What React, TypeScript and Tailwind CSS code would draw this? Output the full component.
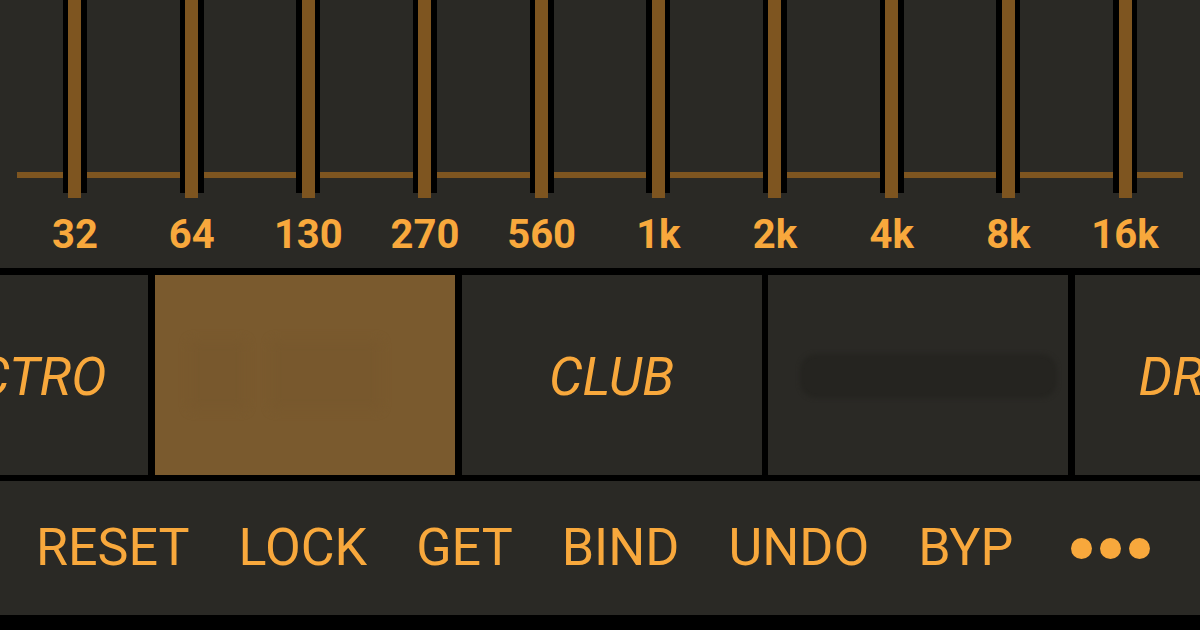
import React from "react";

const bands = ["32", "64", "130", "270", "560", "1k", "2k", "4k", "8k", "16k"];

function Slider() {
  return (
    <div className="relative w-[24px] h-[198px]">
      <div className="w-[24px] h-[193px] bg-black" />
      <div className="absolute left-[5.5px] top-0 w-[13px] h-[198px] bg-[#7e5520]" />
    </div>
  );
}

export default function App() {
  const font = { fontFamily: "Roboto, 'Noto Sans', sans-serif" };
  return (
    <div className="w-[1200px] h-[630px] bg-black flex flex-col overflow-hidden" style={font}>
      {/* EQ section */}
      <div className="h-[268px] bg-[#2a2925] px-[16.67px] shrink-0">
        <div className="relative h-[198px]">
          <div className="absolute left-0 right-0 top-[172px] h-[6px] bg-[#7e5520]" />
          <div className="relative grid grid-cols-10 h-full">
            {bands.map((b) => (
              <div key={b} className="flex justify-center">
                <Slider />
              </div>
            ))}
          </div>
        </div>
        <div className="grid grid-cols-10 h-[70px] pt-[3px]">
          {bands.map((b) => (
            <div
              key={b}
              className="flex items-center justify-center text-[40px] leading-none font-bold text-[#f8a83c]"
            >
              {b}
            </div>
          ))}
        </div>
      </div>

      {/* Presets row */}
      <div className="h-[213px] bg-black pt-[7px] pb-[6px] shrink-0 overflow-hidden">
        <div className="flex h-full gap-[6.67px] ml-[-151.67px]">
          <div className="w-[300px] shrink-0 h-full bg-[#2a2925] flex items-center justify-center pt-[4px] italic text-[53px] leading-none text-[#f8a83c]">
            ELECTRO
          </div>
          <div className="w-[300px] shrink-0 h-full bg-[#7a5a2e] flex items-center justify-center gap-[25px] pr-[40px]">
            <div className="w-[57px] h-[70px] rounded-[6px] bg-[#78582d] blur-[5px]" />
            <div className="w-[110px] h-[70px] rounded-[6px] bg-[#78582d] blur-[5px]" />
          </div>
          <div className="w-[300px] shrink-0 h-full bg-[#2a2925] flex items-center justify-center pt-[4px] italic text-[53px] leading-none text-[#f8a83c]">
            CLUB
          </div>
          <div className="w-[300px] shrink-0 h-full bg-[#2a2925] flex items-center justify-center pl-[20px] pt-[2px]">
            <div className="w-[257px] h-[44px] rounded-[16px] bg-[#252420] blur-[2px]" />
          </div>
          <div className="w-[300px] shrink-0 h-full bg-[#2a2925] flex items-center justify-center pt-[4px] italic text-[53px] leading-none text-[#f8a83c]">
            DREAM
          </div>
        </div>
      </div>

      {/* Bottom bar */}
      <div className="h-[134px] bg-[#2a2925] flex items-center pl-[36px] gap-[49px] shrink-0 text-[52px] leading-none text-[#f8a83c]">
        <span>RESET</span>
        <span>LOCK</span>
        <span>GET</span>
        <span>BIND</span>
        <span>UNDO</span>
        <span>BYP</span>
        <div className="flex items-center gap-[8px] ml-[9px]">
          <div className="w-[21px] h-[21px] rounded-full bg-[#f8a83c]" />
          <div className="w-[21px] h-[21px] rounded-full bg-[#f8a83c]" />
          <div className="w-[21px] h-[21px] rounded-full bg-[#f8a83c]" />
        </div>
      </div>
      <div className="flex-1 bg-black" />
    </div>
  );
}
